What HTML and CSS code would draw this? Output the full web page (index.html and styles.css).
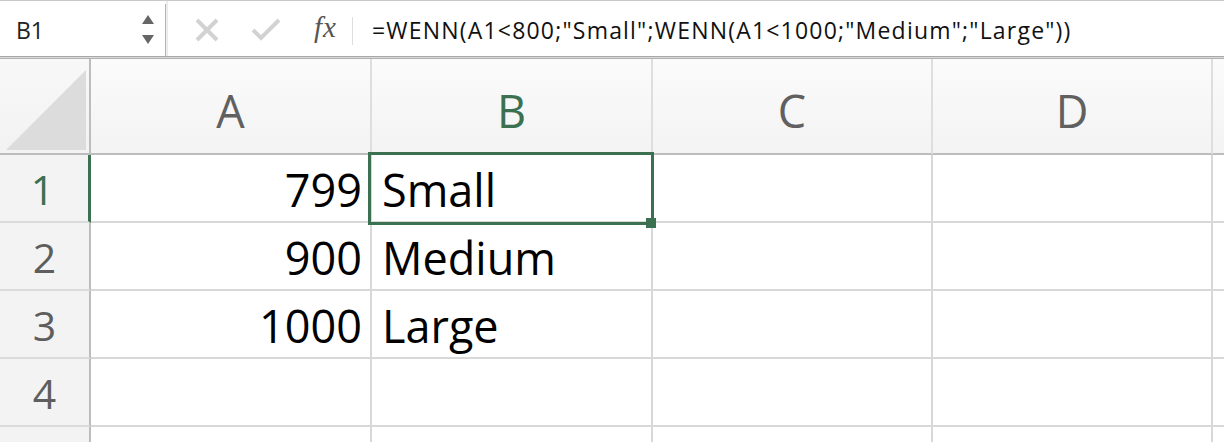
FILE: index.html
```html
<!DOCTYPE html>
<html>
<head>
<meta charset="utf-8">
<link rel="stylesheet" href="styles.css">
</head>
<body>
<div class="toolbar">
  <div class="namebox">
    <span class="name">B1</span>
    <svg class="spin" width="14" height="34" viewBox="0 0 14 34">
      <polygon points="7,2 13,11 1,11" fill="#666"/>
      <polygon points="1,22 13,22 7,31" fill="#666"/>
    </svg>
  </div>
  <div class="fbar">
    <svg class="ico" width="24" height="24" viewBox="0 0 24 24">
      <path d="M2 2 L22 22 M22 2 L2 22" stroke="#d2d2d2" stroke-width="4" fill="none"/>
    </svg>
    <svg class="ico ico-check" width="30" height="24" viewBox="0 0 30 24">
      <path d="M2 12 L10 20 L28 2" stroke="#d2d2d2" stroke-width="4" fill="none"/>
    </svg>
    <span class="fx">fx</span>
    <span class="vsep"></span>
    <span class="formula">=WENN(A1&lt;800;"Small";WENN(A1&lt;1000;"Medium";"Large"))</span>
  </div>
</div>
<div class="rule"></div>
<div class="sheet">
  <div class="grid">
    <div class="corner">
      <svg width="80" height="80" viewBox="0 0 80 80"><polygon points="0,80 80,0 80,80" fill="#dcdcdc"/></svg>
    </div>
    <div class="colhead">A</div>
    <div class="colhead active">B</div>
    <div class="colhead">C</div>
    <div class="colhead">D</div>
    <div class="colhead rest"></div>

    <div class="rownum active">1</div>
    <div class="cell num">799</div>
    <div class="cell">Small</div>
    <div class="cell"></div>
    <div class="cell"></div>
    <div class="cell rest"></div>

    <div class="rownum">2</div>
    <div class="cell num">900</div>
    <div class="cell">Medium</div>
    <div class="cell"></div>
    <div class="cell"></div>
    <div class="cell rest"></div>

    <div class="rownum">3</div>
    <div class="cell num">1000</div>
    <div class="cell">Large</div>
    <div class="cell"></div>
    <div class="cell"></div>
    <div class="cell rest"></div>

    <div class="rownum">4</div>
    <div class="cell num"></div>
    <div class="cell"></div>
    <div class="cell"></div>
    <div class="cell"></div>
    <div class="cell rest"></div>

    <div class="rownum last"></div>
    <div class="cell num last"></div>
    <div class="cell last"></div>
    <div class="cell last"></div>
    <div class="cell last"></div>
    <div class="cell rest last"></div>
  </div>
  <div class="selection"><span class="handle"></span></div>
</div>
</body>
</html>
```
FILE: styles.css
```css
* { box-sizing: border-box; }
html, body {
  margin: 0;
  padding: 0;
  width: 1224px;
  height: 442px;
  overflow: hidden;
  background: #fff;
  font-family: "Open Sans", "Liberation Sans", sans-serif;
}
.toolbar {
  height: 56px;
  display: flex;
  border-top: 1px solid #c9c9c9;
  background: #fff;
}
.namebox {
  width: 166px;
  display: flex;
  align-items: center;
  justify-content: space-between;
  padding: 0 10px 0 16px;
  border-right: 1px solid #b5b5b5;
  margin-top: 3px;
}
.name {
  font-size: 23px;
  color: #222;
  margin-top: 0;
}
.spin { margin-top: -1px; }
.fbar {
  flex: 1;
  display: flex;
  align-items: center;
  border-left: 2px solid #ececec;
}
.ico { margin-left: 27px; margin-top: 2px; }
.ico-check { margin-left: 32px; }
.fx {
  font-family: "Liberation Serif", "DejaVu Serif", serif;
  font-style: italic;
  font-size: 29px;
  color: #555;
  margin-left: 33px;
  margin-top: -2px;
  letter-spacing: 1px;
}
.vsep {
  width: 1px;
  height: 28px;
  background: #dedede;
  margin-left: 15px;
  margin-top: 4px;
}
.formula {
  margin-left: 19px;
  font-size: 23px;
  letter-spacing: 1.2px;
  color: #111;
  white-space: nowrap;
  margin-top: 3px;
}
.rule {
  height: 3px;
  border-top: 1px solid #a8a8a8;
  border-bottom: 1px solid #b2b2b2;
  background: #dadada;
}
.sheet {
  position: relative;
}
.grid {
  display: grid;
  grid-template-columns: 91px 281px 281px 280px 280px 1fr;
  grid-template-rows: 96px 68px 68px 68px 68px 15px;
}
.corner {
  background: linear-gradient(#f8f8f8, #f2f2f2);
  border-right: 2px solid #bdbdbd;
  border-bottom: 2px solid #bdbdbd;
  display: flex;
  align-items: flex-end;
  justify-content: flex-end;
  padding: 0 3px 3px 0;
}
.colhead {
  background: linear-gradient(#fbfbfb, #f3f3f3);
  border-right: 2px solid #dedede;
  border-bottom: 2px solid #bdbdbd;
  display: flex;
  align-items: center;
  justify-content: center;
  font-size: 45px;
  color: #606060;
  padding-top: 8px;
}
.colhead.active { color: #3b7150; }
.colhead.rest { border-right: none; }
.rownum {
  background: #f3f3f3;
  border-right: 2px solid #bdbdbd;
  border-bottom: 2px solid #dadada;
  display: flex;
  align-items: center;
  justify-content: center;
  font-size: 41px;
  color: #5e5e5e;
  padding-top: 2px;
}
.rownum.active {
  color: #3b7150;
  border-right: 3px solid #3b7150;
  padding-right: 3px;
}
.cell {
  border-right: 2px solid #d8d8d8;
  border-bottom: 2px solid #d8d8d8;
  display: flex;
  align-items: flex-end;
  font-size: 45px;
  line-height: 45px;
  color: #000;
  padding: 0 8px 9px 10px;
  white-space: nowrap;
}
.cell.num { justify-content: flex-end; }
.cell.rest { border-right: none; }
.last { border-bottom: none; }
.selection {
  position: absolute;
  left: 368px;
  top: 93px;
  width: 286px;
  height: 73px;
  border: 3px solid #3b7150;
}
.handle {
  position: absolute;
  right: -5px;
  bottom: -6px;
  width: 10px;
  height: 10px;
  background: #3b7150;
}
```
